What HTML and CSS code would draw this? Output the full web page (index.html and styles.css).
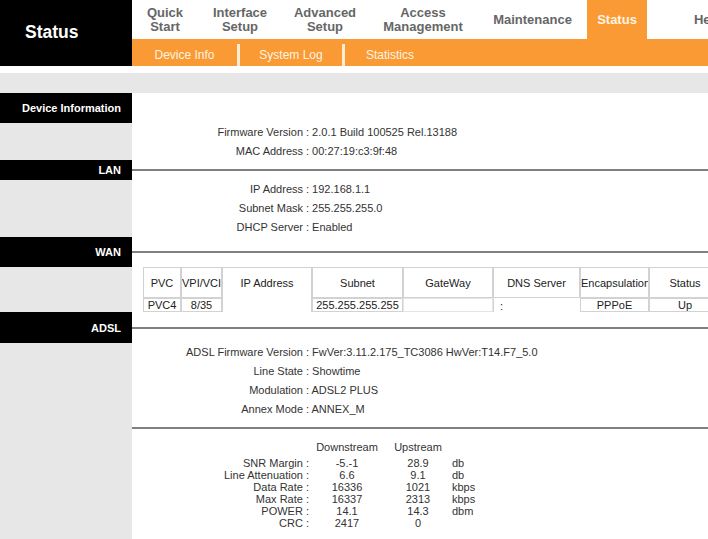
FILE: index.html
```html
<!DOCTYPE html>
<html lang="en">
<head>
  <meta charset="UTF-8">
  <title>Status - Device Info</title>
  <link rel="stylesheet" href="styles.css">
</head>
<body>
  <div class="page">
    <header class="top">
      <div class="brand">Status</div>
      <div class="menu">
        <nav class="tabs">
          <a class="tab tab-quick" href="#">Quick<br>Start</a>
          <a class="tab tab-iface" href="#">Interface<br>Setup</a>
          <a class="tab tab-adv" href="#">Advanced<br>Setup</a>
          <a class="tab tab-access" href="#">Access<br>Management</a>
          <a class="tab tab-maint" href="#">Maintenance</a>
          <a class="tab tab-status active" href="#">Status</a>
          <a class="tab tab-help" href="#">Help</a>
        </nav>
        <nav class="subtabs">
          <a class="subtab sub-info" href="#">Device Info</a>
          <span class="sep"></span>
          <a class="subtab sub-log" href="#">System Log</a>
          <span class="sep"></span>
          <a class="subtab sub-stats" href="#">Statistics</a>
        </nav>
      </div>
    </header>

    <div class="gap"></div>
    <div class="band"></div>

    <main class="sections">
      <div class="row head head-tall">
        <div class="side">Device Information</div>
        <div class="body"></div>
      </div>
      <div class="row">
        <div class="side"></div>
        <dl class="body info info-device">
          <dt>Firmware Version</dt><dd>: 2.0.1 Build 100525 Rel.13188</dd>
          <dt>MAC Address</dt><dd>: 00:27:19:c3:9f:48</dd>
        </dl>
      </div>

      <div class="row head">
        <div class="side">LAN</div>
        <div class="body"><div class="rule"></div></div>
      </div>
      <div class="row">
        <div class="side"></div>
        <dl class="body info">
          <dt>IP Address</dt><dd>: 192.168.1.1</dd>
          <dt>Subnet Mask</dt><dd>: 255.255.255.0</dd>
          <dt>DHCP Server</dt><dd>: Enabled</dd>
        </dl>
      </div>

      <div class="row head head-tall">
        <div class="side">WAN</div>
        <div class="body"><div class="rule"></div></div>
      </div>
      <div class="row">
        <div class="side"></div>
        <div class="body wan">
          <table class="wan-table">
            <colgroup>
              <col class="c-pvc"><col class="c-vpi"><col class="c-ip"><col class="c-mask">
              <col class="c-gw"><col class="c-dns"><col class="c-enc"><col class="c-stat">
            </colgroup>
            <tr>
              <th>PVC</th>
              <th>VPI/VCI</th>
              <th rowspan="2" class="th-ip">IP Address</th>
              <th>Subnet</th>
              <th>GateWay</th>
              <th>DNS Server</th>
              <th>Encapsulation</th>
              <th>Status</th>
            </tr>
            <tr>
              <td>PVC4</td>
              <td>8/35</td>
              <td>255.255.255.255</td>
              <td class="td-gw"></td>
              <td class="td-dns">:</td>
              <td>PPPoE</td>
              <td>Up</td>
            </tr>
          </table>
        </div>
      </div>

      <div class="row head head-adsl">
        <div class="side">ADSL</div>
        <div class="body"><div class="rule"></div></div>
      </div>
      <div class="row">
        <div class="side"></div>
        <dl class="body info">
          <dt>ADSL Firmware Version</dt><dd>: FwVer:3.11.2.175_TC3086 HwVer:T14.F7_5.0</dd>
          <dt>Line State</dt><dd>: Showtime</dd>
          <dt>Modulation</dt><dd>: ADSL2 PLUS</dd>
          <dt>Annex Mode</dt><dd>: ANNEX_M</dd>
        </dl>
      </div>
      <div class="row">
        <div class="side"></div>
        <div class="body divider"><div class="rule"></div></div>
      </div>
      <div class="row">
        <div class="side"></div>
        <div class="body stats">
          <span></span><span class="col-h">Downstream</span><span class="col-h">Upstream</span><span></span>
          <span class="lbl">SNR Margin :</span><span class="num">-5.-1</span><span class="num">28.9</span><span>db</span>
          <span class="lbl">Line Attenuation :</span><span class="num">6.6</span><span class="num">9.1</span><span>db</span>
          <span class="lbl">Data Rate :</span><span class="num">16336</span><span class="num">1021</span><span>kbps</span>
          <span class="lbl">Max Rate :</span><span class="num">16337</span><span class="num">2313</span><span>kbps</span>
          <span class="lbl">POWER :</span><span class="num">14.1</span><span class="num">14.3</span><span>dbm</span>
          <span class="lbl">CRC :</span><span class="num">2417</span><span class="num">0</span><span></span>
        </div>
      </div>
      <div class="row fill">
        <div class="side"></div>
        <div class="body"></div>
      </div>
    </main>
  </div>
</body>
</html>
```

FILE: styles.css
```css
:root {
  --clr-orange: #f99a35;
  --clr-cream: #fff4e2;
  --clr-side: #e7e7e7;
  --clr-rule: #808080;
  --clr-cell: #d2d2d2;
}
*, *::before, *::after {box-sizing: border-box; margin: 0; padding: 0}
html, body {overflow: hidden}
body {
  font-family: "Liberation Sans", Arial, sans-serif;
  font-size: 11px;
  color: #333;
  background: #fff;
}
a {text-decoration: none}
.page {
  width: 780px;
  min-height: 100vh;
  display: flex;
  flex-direction: column;
}

/* top bar */
.top {
  display: flex;
  height: 66px;
}
.brand {
  width: 132px;
  flex-shrink: 0;
  background: #000;
  color: #fff;
  font-size: 17.5px;
  font-weight: bold;
  padding: 0 0 2px 25px;
  display: flex;
  align-items: center;
}
.menu {
  flex: 1;
  display: flex;
  flex-direction: column;
}
.tabs {
  display: flex;
  height: 39px;
}
.tab {
  display: flex;
  align-items: center;
  justify-content: center;
  text-align: center;
  font-size: 13px;
  font-weight: bold;
  line-height: 14px;
  color: #666;
}
.tab.active {
  background: var(--clr-orange);
  color: var(--clr-cream);
}
.tab-quick {width: 66px}
.tab-iface {width: 84px}
.tab-adv {width: 86px}
.tab-access {width: 110px}
.tab-maint {width: 109px}
.tab-status {width: 60px}
.tab-help {width: 122px}
.subtabs {
  height: 27px;
  background: var(--clr-orange);
  display: flex;
  align-items: flex-end;
}
.subtab {
  height: 27px;
  padding-top: 4px;
  display: flex;
  align-items: center;
  justify-content: center;
  font-size: 12px;
  color: var(--clr-cream);
}
.sub-info {width: 105px}
.sub-log {width: 102px}
.sub-stats {width: 90px}
.sep {
  width: 3px;
  height: 22px;
  background: #fdedd6;
}
.gap {height: 7px}
.band {
  height: 20px;
  background: var(--clr-side);
}

/* sections */
.sections {
  flex: 1;
  display: flex;
  flex-direction: column;
  background: linear-gradient(to right, var(--clr-side) 132px, #fff 132px);
}
.row {display: flex}
.row.fill {flex: 1}
.side {
  width: 132px;
  flex-shrink: 0;
}
.body {flex: 1}
.head {height: 20px}
.head-tall {height: 30px}
.head-adsl {height: 31px}
.head .side {
  background: #000;
  color: #fff;
  font-weight: bold;
  padding-right: 11px;
  display: flex;
  align-items: center;
  justify-content: flex-end;
}
.head .body {
  display: flex;
  align-items: center;
}
.rule {
  width: 100%;
  height: 2px;
  background: var(--clr-rule);
}
.info {
  display: grid;
  grid-template-columns: 171px 1fr;
  line-height: 19px;
}
.info-device {height: 37px}
.info dt {text-align: right}
.info dd {padding-left: 3px}
.divider {
  height: 18px;
  display: flex;
  align-items: center;
}

/* wan table */
.wan {
  height: 45px;
  padding-left: 11px;
}
.wan-table {
  width: 578px;
  table-layout: fixed;
  border-collapse: separate;
  border-spacing: 0;
  color: #222;
}
.c-pvc {width: 38px}
.c-vpi {width: 41px}
.c-ip {width: 90px}
.c-mask {width: 91px}
.c-gw {width: 90px}
.c-dns {width: 87px}
.c-enc {width: 69px}
.c-stat {width: 72px}
.wan-table th, .wan-table td {
  border: 1px solid var(--clr-cell);
  text-align: center;
  white-space: nowrap;
  overflow: hidden;
}
.wan-table th {
  font-weight: normal;
  line-height: 13px;
  padding: 9px 0 7px;
}
.wan-table td {
  line-height: 12px;
}
.wan-table .th-ip {
  vertical-align: top;
  border-bottom: none;
}
.wan-table .td-gw {border-color: #e4e4e4}
.wan-table .td-dns {
  text-align: left;
  padding-left: 6px;
  border-top-color: transparent;
  border-right: none;
  border-bottom: none;
}

/* adsl statistics */
.stats {
  display: grid;
  grid-template-columns: 178px 74px 68px 1fr;
  grid-template-rows: 16px;
  grid-auto-rows: 12px;
  line-height: 12px;
  padding-top: 4px;
}
.stats .col-h {text-align: center}
.stats .lbl {text-align: right; padding-right: 1px}
.stats .num {text-align: center}
```
